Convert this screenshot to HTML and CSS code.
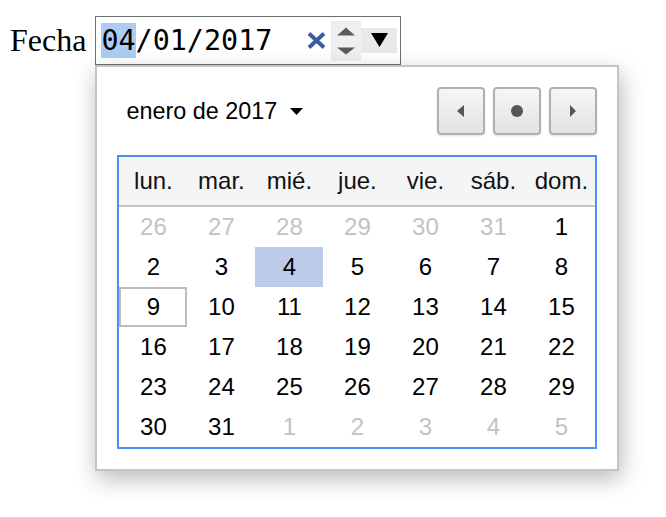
FILE: index.html
```html
<!DOCTYPE html>
<html lang="es">
<head>
<meta charset="utf-8">
<title>Fecha</title>
<link rel="stylesheet" href="styles.css">
</head>
<body>
<div class="row">
  <span class="label">Fecha</span>
  <div class="picker">
    <div class="input">
      <div class="value"><span class="seg sel">04</span><span class="seg">/01/2017</span></div>
      <svg class="clear" width="19" height="17" viewBox="0 0 19 17"><path d="M2 1.5 L17 15.5 M17 1.5 L2 15.5" stroke="#3b5c9b" stroke-width="3.8" fill="none"/></svg>
      <div class="spin">
        <svg width="30" height="40" viewBox="0 0 30 40"><polygon points="6,14.5 15,6.5 24,14.5" fill="#5b5b5b"/><polygon points="6,26.5 24,26.5 15,33.5" fill="#5b5b5b"/></svg>
      </div>
      <div class="drop">
        <svg width="36" height="25" viewBox="0 0 36 25"><polygon points="10,5 27,5 18.5,19" fill="#000"/></svg>
      </div>
    </div>
    <div class="popup">
      <div class="head">
        <div class="month">enero de 2017<svg class="caret" width="13" height="7" viewBox="0 0 13 7"><polygon points="0,0 13,0 6.5,7" fill="#000"/></svg></div>
        <div class="nav">
          <button class="btn"><svg width="10" height="14" viewBox="0 0 10 14"><polygon points="8,1 8,13 1,7" fill="#555"/></svg></button>
          <button class="btn"><svg width="14" height="14" viewBox="0 0 14 14"><circle cx="7" cy="7" r="6" fill="#555"/></svg></button>
          <button class="btn"><svg width="10" height="14" viewBox="0 0 10 14"><polygon points="2,1 2,13 8,7" fill="#555"/></svg></button>
        </div>
      </div>
      <div class="cal">
        <div class="wk">
          <span>lun.</span><span>mar.</span><span>mié.</span><span>jue.</span><span>vie.</span><span>sáb.</span><span>dom.</span>
        </div>
        <div class="days">
          <span class="off">26</span><span class="off">27</span><span class="off">28</span><span class="off">29</span><span class="off">30</span><span class="off">31</span><span>1</span>
          <span>2</span><span>3</span><span class="selected">4</span><span>5</span><span>6</span><span>7</span><span>8</span>
          <span class="today">9</span><span>10</span><span>11</span><span>12</span><span>13</span><span>14</span><span>15</span>
          <span>16</span><span>17</span><span>18</span><span>19</span><span>20</span><span>21</span><span>22</span>
          <span>23</span><span>24</span><span>25</span><span>26</span><span>27</span><span>28</span><span>29</span>
          <span>30</span><span>31</span><span class="off">1</span><span class="off">2</span><span class="off">3</span><span class="off">4</span><span class="off">5</span>
        </div>
      </div>
    </div>
  </div>
</div>
</body>
</html>
```

FILE: styles.css
```css
html, body {
  margin: 0;
  padding: 0;
  background: #fff;
}
html {
  min-height: 100%;
}
body {
  padding: 8px;
  min-height: 517px;
  box-sizing: border-box;
}
.row {
  display: flex;
  align-items: flex-start;
  padding-top: 8px;
}
.label {
  font-family: "Liberation Serif", "Times New Roman", serif;
  font-size: 32px;
  line-height: 49px;
  color: #000;
  margin-left: 2px;
  margin-right: 9px;
}
.picker {
  display: flex;
  flex-direction: column;
  align-items: flex-start;
}
.input {
  box-sizing: border-box;
  width: 306px;
  height: 49px;
  border: 1px solid #6f6f6f;
  background: #fff;
  display: flex;
  align-items: center;
  padding-left: 5px;
  padding-right: 3px;
}
.value {
  flex: 1;
  font-family: "DejaVu Sans Mono", "Liberation Mono", monospace;
  font-size: 28.4px;
  line-height: 35px;
  color: #000;
  display: flex;
}
.seg.sel {
  background: #acccf6;
}
.clear {
  display: block;
  margin-right: 5px;
}
.spin {
  width: 30px;
  height: 40px;
  background: #efefef;
}
.spin svg, .drop svg, .btn svg, .caret {
  display: block;
}
.drop {
  width: 36px;
  height: 25px;
  background: #e9e9e9;
}
.popup {
  box-sizing: border-box;
  width: 524px;
  border: 2px solid #c4c4c4;
  background: #fff;
  padding: 20px;
  box-shadow: 2px 8px 22px rgba(0, 0, 0, 0.28);
  font-family: "Liberation Sans", Arial, sans-serif;
  color: #000;
}
.head {
  display: flex;
  align-items: center;
  justify-content: space-between;
  height: 48px;
}
.month {
  display: flex;
  align-items: center;
  padding-left: 9px;
  font-size: 23.4px;
  gap: 13px;
}
.caret {
  margin-top: 1px;
}
.nav {
  display: flex;
  gap: 8px;
}
.btn {
  box-sizing: border-box;
  width: 48px;
  height: 48px;
  margin: 0;
  padding: 0;
  border: 2px solid #b0b0b0;
  border-radius: 4px;
  background: linear-gradient(#f6f6f6, #e2e2e2);
  box-shadow: 0 1px 2px rgba(0, 0, 0, 0.12);
  display: flex;
  align-items: center;
  justify-content: center;
}
.cal {
  margin-top: 20px;
  border: 2px solid #4f8ef5;
}
.wk {
  display: grid;
  grid-template-columns: repeat(7, 68px);
  height: 48px;
  background: #f5f5f5;
  border-bottom: 2px solid #c6c6c6;
  font-size: 24px;
  line-height: 48px;
  text-align: center;
  color: #111;
}
.days {
  display: grid;
  grid-template-columns: repeat(7, 68px);
  grid-auto-rows: 40px;
  font-size: 24px;
  line-height: 40px;
  text-align: center;
}
.days span {
  box-sizing: border-box;
}
.days .off {
  color: #c3c3c3;
}
.days .selected {
  background: #bccbea;
}
.days .today {
  border: 2px solid #bdbdbd;
  line-height: 36px;
}
```
